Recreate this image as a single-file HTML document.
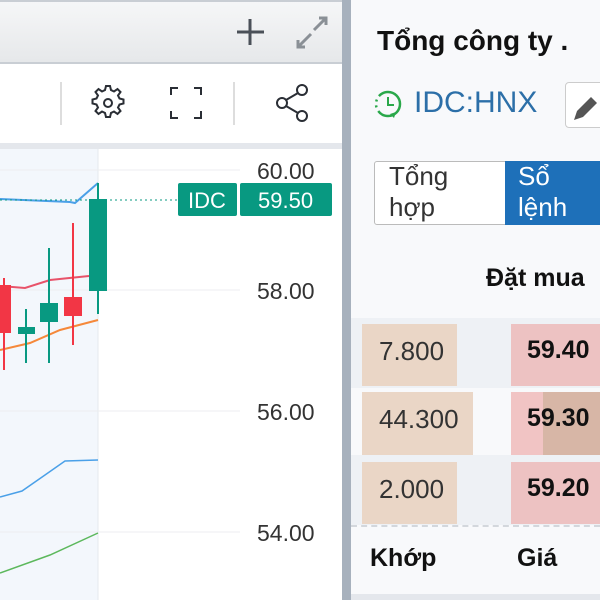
<!DOCTYPE html>
<html><head><meta charset="utf-8"><style>
body{margin:0;width:600px;height:600px;overflow:hidden;background:#fff;font-family:"Liberation Sans",sans-serif;position:relative}
.a{position:absolute;white-space:nowrap}
</style></head><body>
<div class="a" style="left:0;top:0;width:342px;height:62px;background:linear-gradient(#f6f7f8,#e6e8ea);border-bottom:2px solid #c9ced4"></div>
<div class="a" style="left:0;top:0;width:342px;height:2px;background:#c9ced4"></div>
<svg class="a" style="left:0;top:0" width="342" height="600">
<g stroke="#4a5058" stroke-width="3" fill="none"><path d="M237 32H264M250 19V45"/></g>
<g stroke="#8a9096" stroke-width="3" fill="none"><path d="M298 47L311 34M298 40V47H305M314 30L326 18M319 18H326V25"/></g>
<line x1="61" y1="82" x2="61" y2="125" stroke="#ddd" stroke-width="2"/>
<line x1="234" y1="82" x2="234" y2="125" stroke="#ddd" stroke-width="2"/>
<g stroke="#2a2e35" stroke-width="2" fill="none">
<path d="M106 86l4 0 1 4 3 1.5 3.5-2.5 3 3-2.5 3.5 1.5 3 4 1v4l-4 1-1.5 3 2.5 3.5-3 3-3.5-2.5-3 1.5-1 4h-4l-1-4-3-1.5-3.5 2.5-3-3 2.5-3.5-1.5-3-4-1v-4l4-1 1.5-3-2.5-3.5 3-3 3.5 2.5 3-1.5z"/>
<circle cx="108" cy="103" r="4"/>
<path d="M171 95v-7h7M194 88h7v7M201 111v7h-7M178 118h-7v-7"/>
<circle cx="302" cy="90" r="5"/><circle cx="302" cy="116" r="5"/><circle cx="282" cy="103" r="5"/><path d="M286 100l12-7M286 106l12 7"/>
</g>
<rect x="0" y="143" width="342" height="6" fill="#e4e7ec"/>
<rect x="0" y="149" width="98" height="451" fill="#f3f7fc"/>
<line x1="98" y1="149" x2="98" y2="600" stroke="#e6e9ee"/>
<g stroke="#eceef0"><line x1="0" y1="170" x2="240" y2="170"/><line x1="0" y1="290" x2="240" y2="290"/><line x1="0" y1="411" x2="240" y2="411"/><line x1="0" y1="532" x2="240" y2="532"/></g>
<polyline points="0,199 70,202 75,203 98,183" fill="none" stroke="#4aa0e8" stroke-width="2"/>
<line x1="0" y1="200" x2="178" y2="200" stroke="#089981" stroke-dasharray="2,3"/>
<polyline points="0,286 25,288 50,280 89,276" fill="none" stroke="#e8536a" stroke-width="2"/>
<polyline points="0,350 30,343 60,330 98,320" fill="none" stroke="#f5883a" stroke-width="2"/>
<polyline points="0,497 22,491 45,475 65,461 98,460" fill="none" stroke="#4aa0e8" stroke-width="1.5"/>
<polyline points="0,573 50,555 98,533" fill="none" stroke="#5cb85c" stroke-width="1.5"/>
<g fill="#f23645" stroke="#f23645" stroke-width="2"><line x1="4" y1="278" x2="4" y2="370"/><rect x="0" y="285" width="11" height="48" stroke="none"/><line x1="73" y1="223" x2="73" y2="345"/><rect x="64" y="297" width="18" height="19" stroke="none"/></g>
<g fill="#089981" stroke="#089981" stroke-width="2"><line x1="26" y1="309" x2="26" y2="363"/><rect x="18" y="327" width="17" height="7" stroke="none"/><line x1="49" y1="248" x2="49" y2="363"/><rect x="40" y="303" width="18" height="19" stroke="none"/><line x1="98" y1="183" x2="98" y2="314"/><rect x="89" y="199" width="18" height="92" stroke="none"/></g>
<rect x="178" y="183" width="59" height="33" rx="2" fill="#089981"/><rect x="240" y="183" width="92" height="33" rx="2" fill="#089981"/>
<g font-family="Liberation Sans" font-size="22" fill="#fff"><text x="188" y="208">IDC</text><text x="258" y="208">59.50</text></g>
<g font-family="Liberation Sans" font-size="23" fill="#333"><text x="257" y="179">60.00</text><text x="257" y="299">58.00</text><text x="257" y="420">56.00</text><text x="257" y="541">54.00</text></g>
</svg>
<div class="a" style="left:342px;top:0;width:9px;height:600px;background:#a7b1bd"></div>
<div class="a" style="left:351px;top:0;width:249px;height:600px;background:#f8f9fb"></div>
<div class="a" style="left:377px;top:25px;font-size:28px;font-weight:bold;color:#111">Tổng công ty .</div>
<svg class="a" style="left:372px;top:88px" width="34" height="34"><circle cx="16" cy="16" r="12" fill="none" stroke="#2aa84a" stroke-width="2.5" stroke-dasharray="30 4 2 4 2 4"/><path d="M16 9v8h6" stroke="#2aa84a" stroke-width="2" fill="none"/><path d="M18 26l4 4 2-6z" fill="#2aa84a"/></svg>
<div class="a" style="left:414px;top:86px;font-size:30px;color:#2c6fa8">IDC:HNX</div>
<div class="a" style="left:565px;top:82px;width:40px;height:44px;border:1px solid #ccc;border-radius:4px;background:#fff"></div>
<svg class="a" style="left:570px;top:90px" width="30" height="34"><path d="M4 30l3-9 14-14 6 6-14 14z" fill="#555"/></svg>
<div class="a" style="left:374px;top:161px;width:130px;height:62px;border:1px solid #bbb;border-radius:3px 0 0 3px;background:#fff"></div>
<div class="a" style="left:505px;top:161px;width:95px;height:64px;background:#1e70b9"></div>
<div class="a" style="left:389px;top:161px;font-size:26px;line-height:31px;color:#333">Tổng<br>hợp</div>
<div class="a" style="left:518px;top:161px;font-size:26px;line-height:31px;color:#fff">Sổ<br>lệnh</div>
<div class="a" style="left:486px;top:264px;font-size:25px;font-weight:bold;color:#111">Đặt mua</div>
<div class="a" style="left:351px;top:318px;width:249px;height:70px;background:#eef1f5"></div>
<div class="a" style="left:351px;top:455px;width:249px;height:70px;background:#eef1f5"></div>
<div class="a" style="left:362px;top:324px;width:95px;height:62px;background:#ead6c6"></div>
<div class="a" style="left:362px;top:392px;width:111px;height:63px;background:#ead6c6"></div>
<div class="a" style="left:362px;top:462px;width:95px;height:62px;background:#ead6c6"></div>
<div class="a" style="left:511px;top:324px;width:89px;height:62px;background:#edc2c2"></div>
<div class="a" style="left:511px;top:392px;width:89px;height:63px;background:#f1c4c4"></div>
<div class="a" style="left:543px;top:392px;width:57px;height:63px;background:#d7b6a6"></div>
<div class="a" style="left:511px;top:462px;width:89px;height:62px;background:#edc2c2"></div>
<div class="a" style="font-size:26px;color:#333;left:379px;top:336px">7.800</div>
<div class="a" style="font-size:26px;color:#333;left:379px;top:404px">44.300</div>
<div class="a" style="font-size:26px;color:#333;left:379px;top:474px">2.000</div>
<div class="a" style="font-size:25px;font-weight:bold;color:#111;left:527px;top:336px">59.40</div>
<div class="a" style="font-size:25px;font-weight:bold;color:#111;left:527px;top:404px">59.30</div>
<div class="a" style="font-size:25px;font-weight:bold;color:#111;left:527px;top:474px">59.20</div>
<div class="a" style="left:351px;top:525px;width:249px;border-top:2px dashed #d3d7dc"></div>
<div class="a" style="left:370px;top:544px;font-size:25px;font-weight:bold;color:#111">Khớp</div>
<div class="a" style="left:517px;top:544px;font-size:25px;font-weight:bold;color:#111">Giá</div>
<div class="a" style="left:351px;top:594px;width:249px;height:6px;background:#e4e7ec"></div>
</body></html>
